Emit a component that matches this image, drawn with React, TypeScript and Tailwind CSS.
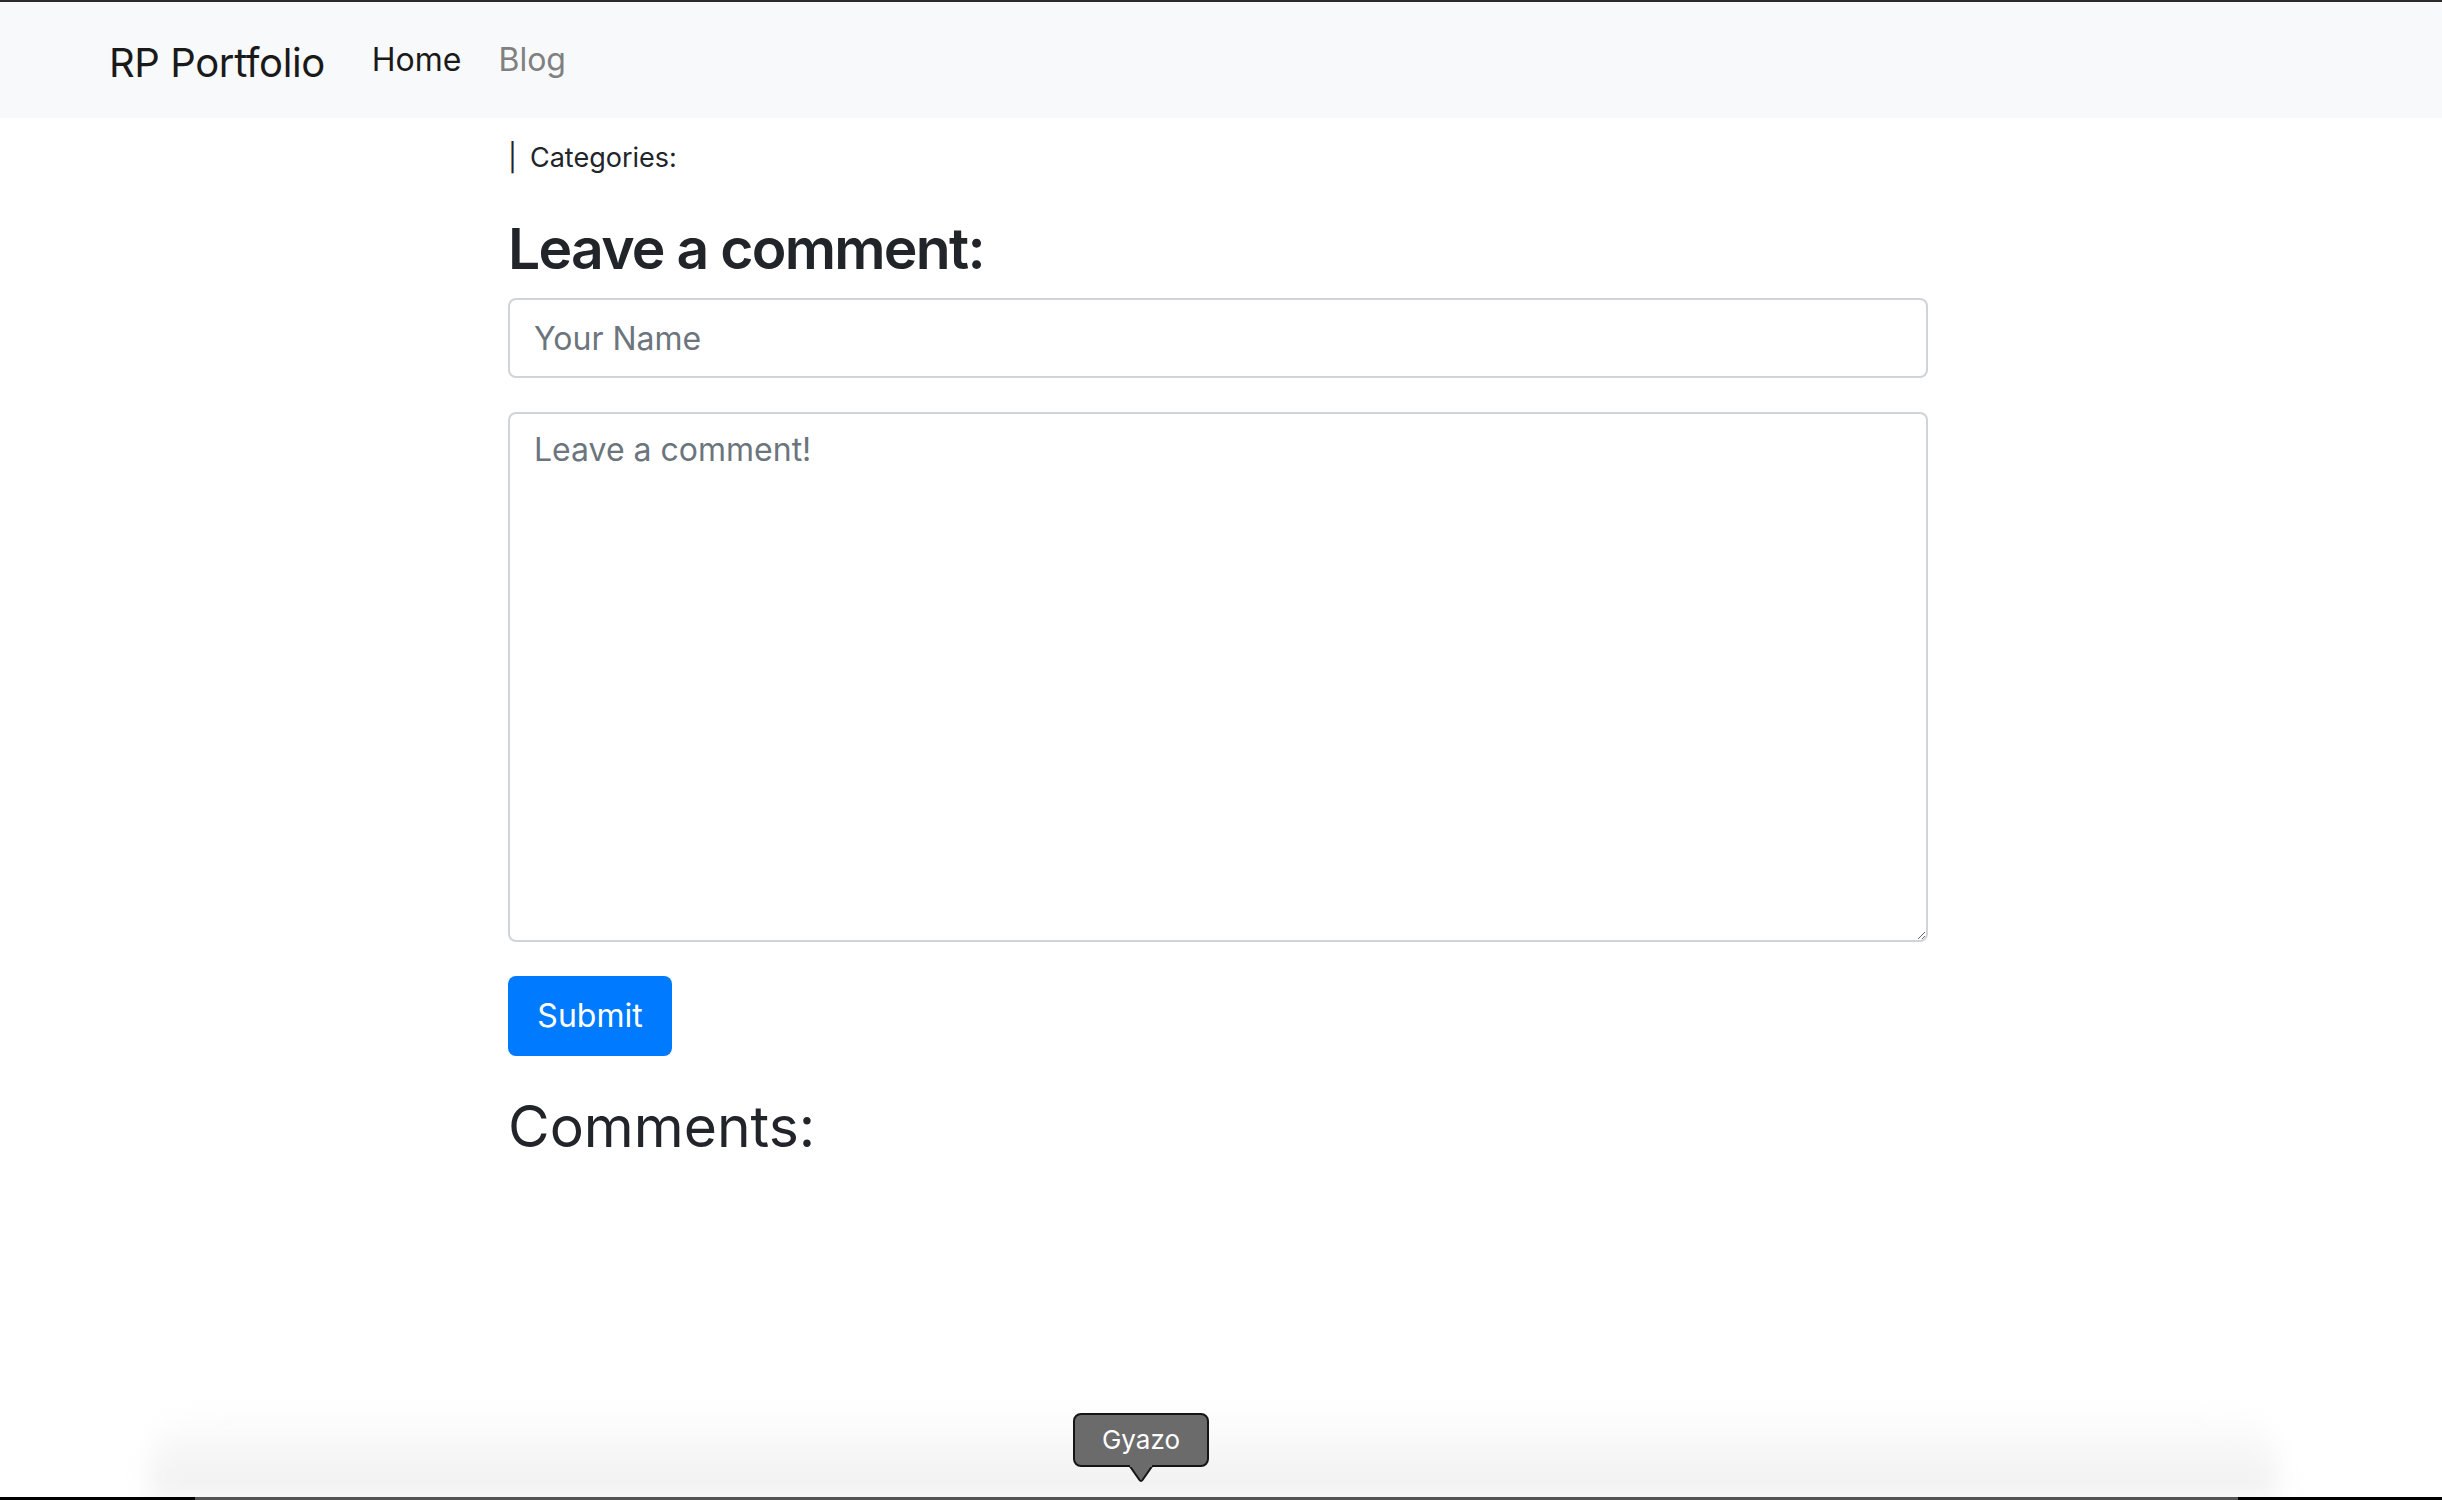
import React from 'react';

const font = { fontFamily: 'Inter, "Noto Sans", sans-serif' };

const Navbar: React.FC = () => (
  <nav className="h-[116px] bg-[#f8f9fa] flex items-start pt-[41px] pl-[109px]">
    <a href="#" className="text-[40px] leading-none text-[#1a1a1a] tracking-[-0.01em] mr-[47px]">
      RP Portfolio
    </a>
    <div className="flex items-start gap-[37px]">
      <a href="#" className="text-[32px] leading-none text-[#1a1a1a] mt-[1px]">Home</a>
      <a href="#" className="text-[32px] leading-none text-[#808080] mt-[1px]">Blog</a>
    </div>
  </nav>
);

const CommentForm: React.FC = () => (
  <form className="flex flex-col" onSubmit={e => e.preventDefault()}>
    <input
      type="text"
      placeholder="Your Name"
      className="h-[80px] w-full border-2 border-[#ced4da] rounded-[8px] px-6 text-[32px] text-[#495057] placeholder:text-[#6c757d] outline-none"
    />
    <textarea
      placeholder="Leave a comment!"
      className="mt-[34px] h-[530px] w-full border-2 border-[#ced4da] rounded-[8px] px-6 py-3 text-[32px] leading-[1.5] text-[#495057] placeholder:text-[#6c757d] outline-none"
    />
    <div className="mt-[34px]">
      <button
        type="submit"
        className="h-[80px] w-[164px] rounded-[8px] bg-[#007bff] text-white text-[32px] leading-none"
      >
        Submit
      </button>
    </div>
  </form>
);

const DockTooltip: React.FC = () => (
  <>
    <div className="absolute left-[150px] right-[165px] bottom-[3px] h-[90px] bg-gradient-to-b from-white to-[#efefef] rounded-t-[60px] blur-[12px]" />
    <div className="absolute left-[1073px] top-[1411px] flex flex-col items-center">
      <div className="w-[136px] h-[54px] rounded-[8px] border-2 border-[#151515] bg-[#6b6b6b] flex items-center justify-center">
        <span className="text-[26px] leading-none text-white">Gyazo</span>
      </div>
      <svg width="26" height="18" viewBox="0 0 26 18" className="-mt-[2px]">
        <path d="M1 0 L11.5 15 Q13 17 14.5 15 L25 0 Z" fill="#6b6b6b" stroke="#151515" strokeWidth="2" />
        <rect x="2" y="0" width="22" height="2" fill="#6b6b6b" />
      </svg>
    </div>
    <div className="absolute left-0 right-0 bottom-0 h-[3px] bg-black flex">
      <div className="ml-[195px] w-[2043px] bg-[#555555]" />
    </div>
  </>
);

export default function App() {
  return (
    <div className="relative h-[1500px] overflow-hidden bg-white border-t-2 border-[#2b2b2b]" style={font}>
      <Navbar />
      <main className="w-[1420px] ml-[508px] text-[#212529]">
        <div className="mt-[26px] flex items-start text-[27px] leading-none">
          <span className="mr-[13px] text-[#212529]">|</span>
          <span>Categories:</span>
        </div>
        <h3 className="mt-[49px] text-[57px] leading-none font-semibold tracking-[-0.03em]">
          Leave a comment:
        </h3>
        <div className="mt-[21px]">
          <CommentForm />
        </div>
        <h3 className="mt-[42px] text-[57px] leading-none font-normal">Comments:</h3>
      </main>
      <DockTooltip />
    </div>
  );
}
